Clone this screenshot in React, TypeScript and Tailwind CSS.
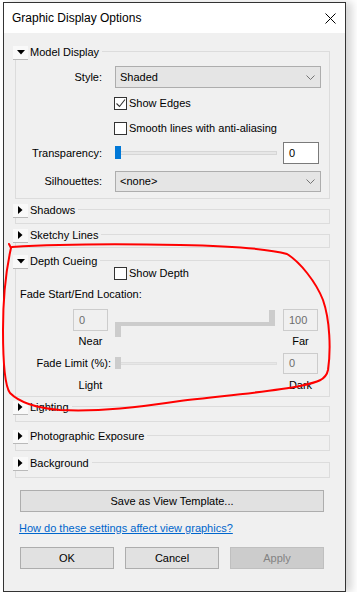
import type { ReactNode } from 'react';

const Toggle = ({ open }: { open: boolean }) => (
  <div className="w-[15px] h-[14px] bg-[#f9f9f9] border-b border-[#b9b9b9] flex items-center justify-center">
    {open ? (
      <svg width="8" height="5" viewBox="0 0 8 5"><path d="M0 0h8L4 4.5z" fill="#000" /></svg>
    ) : (
      <svg width="5" height="8" viewBox="0 0 5 8"><path d="M0 0v8l4.5-4z" fill="#000" /></svg>
    )}
  </div>
);

const Group = ({ title, open, className, children }:
  { title: string; open?: boolean; className: string; children?: ReactNode }) => (
  <div className={`relative border border-[#dcdcdc] ${className}`}>
    <div className="absolute left-[-3px] top-[-7px] flex items-center bg-[#f0f0f0] pr-[3px]">
      <Toggle open={!!open} />
      <span className="ml-[2px] text-[11px] leading-[15px]">{title}</span>
    </div>
    {children}
  </div>
);

const Check = ({ checked, label }: { checked?: boolean; label: string }) => (
  <div className="flex items-center h-[13px] pl-[98px]">
    <div className="w-[13px] h-[13px] border border-[#333] bg-white flex items-center justify-center">
      {checked && (
        <svg width="11" height="11" viewBox="0 0 11 11">
          <path d="M1.5 5.5l3 3 5.5-7" fill="none" stroke="#333" strokeWidth="1.1" />
        </svg>
      )}
    </div>
    <span className="ml-[2px] text-[11px] leading-[15px]">{label}</span>
  </div>
);

const Select = ({ value }: { value: string }) => (
  <div className="ml-[13px] w-[206px] h-full bg-[#e5e5e5] border border-[#adadad] flex items-center justify-between pl-[4px] pr-[5px]">
    <span className="text-[11px] leading-[15px]">{value}</span>
    <svg width="9" height="5" viewBox="0 0 9 5"><path d="M0.5 0.5l4 4 4-4" fill="none" stroke="#666" strokeWidth="0.9" /></svg>
  </div>
);

const Btn = ({ label, className, disabled }: { label: string; className: string; disabled?: boolean }) => (
  <div className={`h-[22px] flex items-center justify-center text-[11px] border ${disabled ? 'bg-[#cccccc] border-[#bfbfbf] text-[#838383]' : 'bg-[#e1e1e1] border-[#adadad] text-black'} ${className}`}>
    {label}
  </div>
);

const DisabledBox = ({ value }: { value: string }) => (
  <div className="w-[35px] h-full border border-[#cccccc] bg-[#f0f0f0] flex items-center pl-[5px] text-[11px] text-[#6d6d6d]">
    {value}
  </div>
);

export default function App() {
  return (
    <div className="w-[357px] h-[592px] bg-white relative overflow-hidden font-['Liberation_Sans',Arial,sans-serif] text-black">
      <div className="ml-[3px] mt-[2px] w-[343px] h-[590px] border border-[#333] bg-[#f0f0f0] shadow-[6px_0_8px_rgba(0,0,0,0.16)] flex flex-col">
        {/* title bar */}
        <div className="h-[30px] bg-white flex items-center justify-between pl-[8px] pr-[9px]">
          <span className="text-[12px] leading-[16px]">Graphic Display Options</span>
          <svg width="11" height="11" viewBox="0 0 11 11">
            <path d="M0.5 0.5l10 10M10.5 0.5l-10 10" stroke="#000" strokeWidth="1" />
          </svg>
        </div>

        <div className="flex flex-col pl-[11px] pr-[15px] pt-[18px]">
          <Group title="Model Display" open className="h-[148px]">
            <div className="flex flex-col pt-[14px]">
              <div className="flex items-center h-[22px]">
                <span className="w-[86px] text-right text-[11px] leading-[15px]">Style:</span>
                <Select value="Shaded" />
              </div>
              <div className="mt-[9px]"><Check checked label="Show Edges" /></div>
              <div className="mt-[12px]"><Check label="Smooth lines with anti-aliasing" /></div>
              <div className="mt-[7px] flex items-center h-[22px]">
                <span className="w-[86px] text-right text-[11px] leading-[15px]">Transparency:</span>
                <div className="ml-[13px] w-[162px] h-full relative flex items-center">
                  <div className="w-full h-[4px] bg-[#e7e7e7] border border-[#d6d6d6]" />
                  <div className="absolute left-0 top-[4px] w-[6px] h-[13px] bg-[#0078d7]" />
                </div>
                <div className="ml-[6px] w-[36px] h-full bg-white border border-[#7a7a7a] flex items-center pl-[5px] text-[11px]">0</div>
              </div>
              <div className="mt-[7px] flex items-center h-[21px]">
                <span className="w-[86px] text-right text-[11px] leading-[15px]">Silhouettes:</span>
                <Select value="<none>" />
              </div>
            </div>
          </Group>

          <Group title="Shadows" className="mt-[10px] h-[15px]" />
          <Group title="Sketchy Lines" className="mt-[10px] h-[14px]" />

          <Group title="Depth Cueing" open className="mt-[12px] h-[137px]">
            <div className="flex flex-col pt-[6px]">
              <Check label="Show Depth" />
              <span className="mt-[7px] pl-[4px] text-[11px] leading-[15px]">Fade Start/End Location:</span>
              <div className="mt-[7px] flex h-[22px]">
                <div className="ml-[57px]"><DisabledBox value="0" /></div>
                <div className="ml-[7px] w-[160px] h-full relative">
                  <div className="absolute left-0 top-[13px] w-full h-[4px] bg-[#cccccc]" />
                  <div className="absolute left-0 top-[13px] w-[6px] h-[15px] bg-[#cccccc]" />
                  <div className="absolute right-0 top-[1px] w-[6px] h-[15px] bg-[#cccccc]" />
                </div>
                <div className="ml-[8px]"><DisabledBox value="100" /></div>
              </div>
              <div className="mt-[3px] flex text-[11px] leading-[15px]">
                <span className="ml-[57px] w-[35px] text-center">Near</span>
                <span className="ml-[175px] w-[35px] text-center">Far</span>
              </div>
              <div className="mt-[4px] flex items-center h-[21px]">
                <span className="w-[95px] text-right text-[11px] leading-[15px]">Fade Limit (%):</span>
                <div className="ml-[4px] w-[162px] h-full relative flex items-center">
                  <div className="w-full h-[3px] bg-[#e7e7e7] border border-[#dedede]" />
                  <div className="absolute left-0 top-[4px] w-[6px] h-[12px] bg-[#cccccc]" />
                </div>
                <div className="ml-[6px] h-full"><DisabledBox value="0" /></div>
              </div>
              <div className="mt-[4px] flex text-[11px] leading-[15px]">
                <span className="ml-[57px] w-[35px] text-center">Light</span>
                <span className="ml-[175px] w-[35px] text-center">Dark</span>
              </div>
            </div>
          </Group>

          <Group title="Lighting" className="mt-[9px] h-[16px]" />
          <Group title="Photographic Exposure" className="mt-[13px] h-[16px]" />
          <Group title="Background" className="mt-[11px] h-[16px]" />

          <Btn label="Save as View Template..." className="mt-[12px] ml-[5px] w-[304px]" />

          <span className="mt-[9px] ml-[4px] text-[11px] leading-[15px] text-[#0066cc] underline">How do these settings affect view graphics?</span>

          <div className="mt-[11px] ml-[5px] flex gap-[11px]">
            <Btn label="OK" className="w-[94px]" />
            <Btn label="Cancel" className="w-[94px]" />
            <Btn label="Apply" className="w-[94px]" disabled />
          </div>
        </div>
      </div>

      <svg className="absolute left-0 top-0 pointer-events-none" width="357" height="592" viewBox="0 0 357 592">
        <path
          d="M12 247 C60 244,130 244,180 245 C230 246,270 249,287 254 C300 262,316 282,323 300 C330 320,331 350,328 370 C326 380,318 382,300 386 C270 392,220 396,180 401 C140 407,100 412,60 410 C35 408,20 403,10 393 C4 385,3 360,3 330 C3 300,6 270,11 248 L9 244"
          fill="none" stroke="#ff0000" strokeWidth="2" strokeLinecap="round" strokeLinejoin="round" />
      </svg>
    </div>
  );
}
